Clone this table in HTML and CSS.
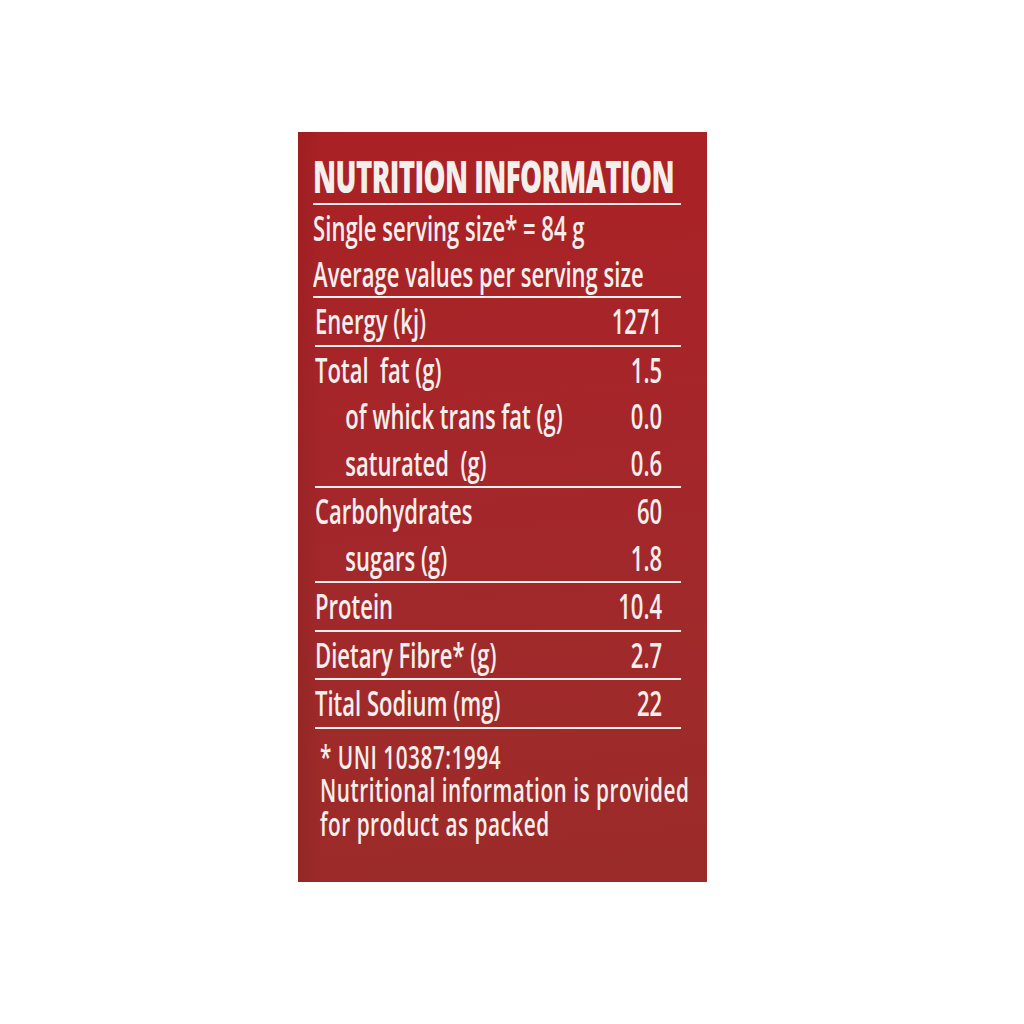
FILE: index.html
```html
<!DOCTYPE html>
<html lang="en">
<head>
<meta charset="utf-8">
<title>Nutrition Information</title>
<link rel="stylesheet" href="styles.css">
</head>
<body>
<main class="stage">
  <section class="label">
    <div class="content">
      <h1 class="title">NUTRITION INFORMATION</h1>
      <p class="line">Single serving size* = 84 g</p>
      <p class="line ruled">Average values per serving size</p>
      <div class="row ruled"><span class="name">Energy (kj)</span><span class="val">1271</span></div>
      <div class="row"><span class="name">Total&nbsp; fat (g)</span><span class="val">1.5</span></div>
      <div class="row sub"><span class="name">of whick trans fat (g)</span><span class="val">0.0</span></div>
      <div class="row sub ruled"><span class="name">saturated&nbsp; (g)</span><span class="val">0.6</span></div>
      <div class="row"><span class="name">Carbohydrates</span><span class="val">60</span></div>
      <div class="row sub ruled"><span class="name">sugars (g)</span><span class="val">1.8</span></div>
      <div class="row ruled"><span class="name">Protein</span><span class="val">10.4</span></div>
      <div class="row ruled"><span class="name">Dietary Fibre* (g)</span><span class="val">2.7</span></div>
      <div class="row ruled"><span class="name">Tital Sodium (mg)</span><span class="val">22</span></div>
      <div class="foot">
        <p>* UNI 10387:1994</p>
        <p>Nutritional information is provided</p>
        <p>for product as packed</p>
      </div>
    </div>
  </section>
</main>
</body>
</html>
```
FILE: styles.css
```css
html, body {
  margin: 0;
  padding: 0;
  background: #ffffff;
}

.stage {
  width: 1024px;
  height: 1024px;
  padding-top: 132px;
  padding-left: 298px;
  box-sizing: border-box;
}

.label {
  width: 409px;
  height: 750px;
  box-sizing: border-box;
  padding: 22px 0 0 17px;
  background:
    linear-gradient(90deg, rgba(80, 10, 10, 0.12) 0%, rgba(80, 10, 10, 0) 6%),
    linear-gradient(175deg, #aa2124 0%, #a5262a 40%, #9f2a2a 75%, #9a2b28 100%);
  color: #f4eeec;
  font-family: "Open Sans", "Noto Sans", sans-serif;
  overflow: hidden;
}

.content {
  width: 581px;
  transform: scaleX(0.63);
  transform-origin: 0 0;
}

.title {
  margin: 0 0 0 -3px;
  padding-bottom: 5px;
  font-size: 44px;
  line-height: 44px;
  font-weight: 800;
  letter-spacing: -1px;
  border-bottom: 2px solid #f4eeec;
  white-space: nowrap;
}

.line {
  margin: 0 0 0 -3px;
  font-size: 35px;
  line-height: 45.5px;
  font-weight: 600;
  white-space: nowrap;
}

.ruled {
  border-bottom: 2px solid #f4eeec;
}

.row {
  display: flex;
  justify-content: space-between;
  font-size: 35px;
  line-height: 46.5px;
  font-weight: 600;
  padding-right: 30px;
  white-space: nowrap;
}

.row.sub .name {
  padding-left: 48px;
}

.foot {
  margin-top: 11px;
  padding-left: 8px;
  font-size: 33px;
  line-height: 33.5px;
  font-weight: 600;
  letter-spacing: 0.8px;
  white-space: nowrap;
}

.foot p {
  margin: 0;
}
```
